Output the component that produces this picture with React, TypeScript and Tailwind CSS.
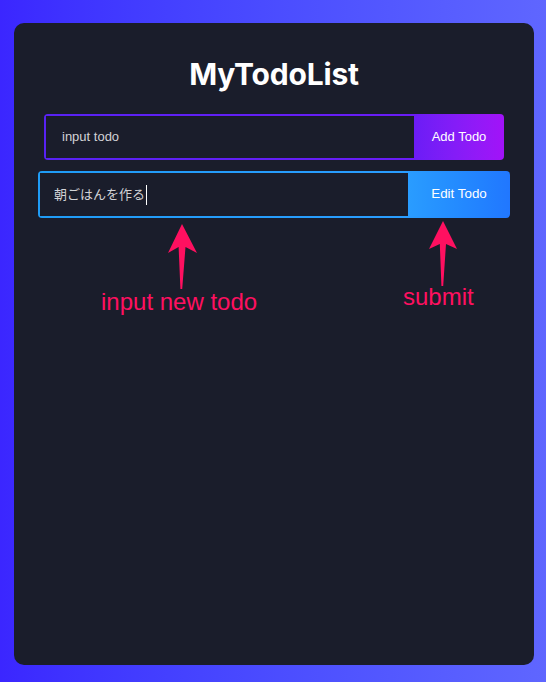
import React from "react";

export default function App() {
  return (
    <div className="relative w-[546px] h-[682px] overflow-hidden bg-gradient-to-r from-[#3b26ff] to-[#5f66ff] pl-[14px] pr-[12px] pt-[23px] font-['Liberation_Sans',Arial,sans-serif]">
      <div className="h-[642px] rounded-[10px] bg-[#1a1d2b] pt-[33px] flex flex-col items-center">
        <h1 className="text-[30px] leading-[36px] font-bold text-white font-['Inter',sans-serif] tracking-[-0.2px]">
          MyTodoList
        </h1>

        <div className="mt-[22px] w-[460px] h-[46px] rounded-[4px] flex p-[2px] pr-0 bg-linear-to-r from-[#5822f4] via-[#6a1cf6] via-80% to-[#a212f8]">
          <div className="flex-1 bg-[#1a1d2b] flex items-center pl-[16px] text-[13px] text-[#d2d2d6]">
            input todo
          </div>
          <div className="w-[90px] flex items-center justify-center text-[13px] text-white">
            Add Todo
          </div>
        </div>

        <div className="mt-[11px] w-[472px] h-[47px] rounded-[4px] flex p-[2px] pr-0 bg-linear-to-r from-[#1f9cf6] via-[#2a9dff] via-[78%] to-[#2177ff]">
          <div className="flex-1 bg-[#1a1d2b] flex items-center pl-[14px] text-[13px] text-[#d2d2d6] font-['Liberation_Sans','Noto_Sans_CJK_JP',sans-serif]">
            <span>朝ごはんを作る</span>
            <span className="inline-block w-px h-[20px] bg-white ml-px" />
          </div>
          <div className="w-[102px] flex items-center justify-center text-[13.4px] text-white">
            Edit Todo
          </div>
        </div>
      </div>

      <svg
        className="absolute left-0 top-0 pointer-events-none"
        width="546"
        height="682"
        viewBox="0 0 546 682"
      >
        <path
          d="M182 224 L197 253 L185.5 247 L182.2 289 L180.4 289 L178.6 247 L168 253 Z"
          fill="#ff1060"
        />
        <path
          d="M443 221 L457 249 L446 244 L443.2 286 L441.4 286 L439.8 244 L429 249 Z"
          fill="#ff1060"
        />
      </svg>
      <span className="absolute left-[101px] top-[290px] text-[24px] leading-[24px] text-[#ff1060] whitespace-nowrap">
        input new todo
      </span>
      <span className="absolute left-[403px] top-[285px] text-[24px] leading-[24px] text-[#ff1060] whitespace-nowrap">
        submit
      </span>
    </div>
  );
}
